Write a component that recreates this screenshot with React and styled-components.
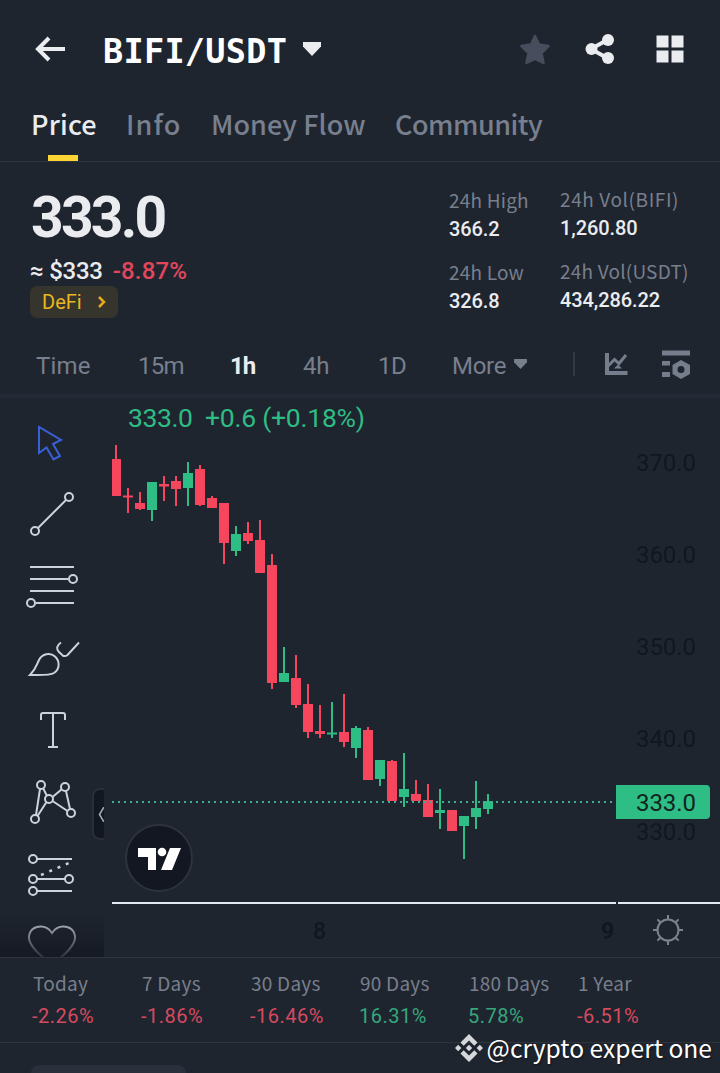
import React from "react";
import styled, { createGlobalStyle } from "styled-components";

const c = {
  bg: "#1f252f",
  line: "#2e343e",
  text: "#eaecef",
  muted: "#787f8d",
  green: "#2ebd85",
  red: "#f6465d",
  tool: "#ccd2dd",
};
const sans = `"Noto Sans CJK SC", "Noto Sans", sans-serif`;
const num = `Roboto, "Liberation Sans", sans-serif`;

const Global = createGlobalStyle`
  * { box-sizing: border-box; }
  body { margin: 0; background: ${c.bg}; color: ${c.text}; font-family: ${sans}; }
  svg { display: block; flex: none; }
`;

const Screen = styled.main`
  width: 720px;
  height: 1073px;
  overflow: hidden;
  display: flex;
  flex-direction: column;
  background: ${c.bg};
`;

const Header = styled.header`
  height: 98px;
  flex: none;
  display: flex;
  align-items: center;
  padding: 0 36px 0 34px;
`;
const Title = styled.h1`
  margin: 6px 0 0 37px;
  font: 700 33.5px/40px "DejaVu Sans Mono", monospace;
  letter-spacing: 0.3px;
  color: #fff;
  white-space: nowrap;
`;
const TitleCaret = styled.div`
  margin-left: 16px;
`;
const HeaderActions = styled.div`
  margin-left: auto;
  display: flex;
  align-items: center;
`;
const ShareIcon = styled.div`
  margin: 0 41px 0 35px;
`;

const Tabs = styled.nav`
  height: 64px;
  flex: none;
  display: flex;
  align-items: flex-start;
  padding-left: 31px;
  border-bottom: 1px solid ${c.line};
`;
const Tab = styled.div`
  width: ${(p) => p.$w}px;
  margin-right: ${(p) => p.$gap}px;
  height: 63px;
  display: flex;
  flex-direction: column;
  align-items: flex-start;
  justify-content: space-between;
  white-space: nowrap;
  font: 500 27px/52px ${sans};
  letter-spacing: ${(p) => p.$ls || 0}px;
  color: ${(p) => (p.$active ? c.text : c.muted)};
  &::after {
    content: "";
    width: 30px;
    height: 6px;
    margin-left: 17px;
    background: ${(p) => (p.$active ? "#fcd535" : "transparent")};
  }
`;

const Summary = styled.section`
  height: 173px;
  flex: none;
  display: flex;
  padding-left: 30px;
`;
const PriceBlock = styled.div`
  width: 419px;
  display: flex;
  flex-direction: column;
  align-items: flex-start;
`;
const Price = styled.div`
  margin: 29px 0 0 1px;
  font: 700 57px/54px ${num};
  letter-spacing: -2.8px;
`;
const Change = styled.div`
  display: flex;
  align-items: center;
  gap: 10px;
  margin-top: 12px;
  height: 29px;
  font: 500 24px/29px ${num};
  letter-spacing: -0.25px;
`;
const Delta = styled.span`
  color: #e2465c;
  letter-spacing: 0.15px;
`;
const Tag = styled.div`
  width: 88px;
  height: 32px;
  display: flex;
  align-items: center;
  justify-content: space-between;
  padding: 0 12px;
  border-radius: 7px;
  background: #35342d;
  color: #e9b71d;
  font: 400 20px/32px ${num};
`;
const Stats = styled.div`
  display: flex;
  padding-top: ${(p) => p.$top}px;
  width: ${(p) => p.$w}px;
  flex-direction: column;
  gap: 16px;
  flex: none;
`;
const Stat = styled.div`
  height: 56px;
  font: 500 20px/31px ${num};
  letter-spacing: -0.1px;
`;
const StatLabel = styled.div`
  font: 400 19px/28px ${sans};
  letter-spacing: ${(p) => p.$ls || 0.2}px;
  color: ${c.muted};
  white-space: nowrap;
`;

const Intervals = styled.nav`
  height: 63px;
  flex: none;
  display: flex;
  align-items: center;
  padding: 0 30px 1px 36px;
  border-bottom: 4px solid #252b36;
`;
const Interval = styled.div`
  width: ${(p) => p.$w}px;
  flex: none;
  display: flex;
  align-items: center;
  gap: 8px;
  font: ${(p) => (p.$active ? 700 : 400)} 24px/28px ${num};
  padding-top: 3px;
  letter-spacing: ${(p) => p.$ls || 0}px;
  color: ${(p) => (p.$active ? c.text : c.muted)};
  svg { margin-top: -4px; }
`;
const Separator = styled.div`
  width: 2px;
  height: 24px;
  margin-right: 30px;
  background: #343a45;
`;
const SettingsIcon = styled.div`
  margin-left: 34px;
`;

const ChartArea = styled.section`
  height: 560px;
  flex: none;
  display: flex;
  border-bottom: 1px solid ${c.line};
`;
const Toolbar = styled.aside`
  position: relative;
  width: 104px;
  flex: none;
  overflow: hidden;
  display: flex;
  flex-direction: column;
  align-items: center;
  padding-top: 8px;
`;
const Tool = styled.div`
  width: 104px;
  height: 72px;
  flex: none;
`;
const Fade = styled.div`
  position: absolute;
  inset: auto 0 0 0;
  height: 44px;
  background: linear-gradient(rgba(19, 23, 34, 0), rgba(19, 23, 34, 0.85));
`;
const Handle = styled.div`
  position: absolute;
  right: -12px;
  top: 390px;
  width: 24px;
  height: 52px;
  padding: 17px 0 0 4px;
  border: 2px solid #2a2e39;
  border-radius: 8px;
  background: #131722;
`;

const Periods = styled.section`
  height: 85px;
  flex: none;
  display: flex;
  padding: 10px 0 0 32px;
  border-bottom: 1px solid ${c.line};
`;
const Period = styled.div`
  width: ${(p) => p.$w}px;
  flex: none;
  color: ${(p) => (p.$up ? "#36a67c" : "#d64a60")};
  font: 400 20px/39px ${num};
  letter-spacing: 0.5px;
`;
const PeriodLabel = styled.div`
  font: 400 19px/29px ${sans};
  letter-spacing: 0.25px;
  padding-left: 1px;
  color: ${c.muted};
`;

const Footer = styled.footer`
  position: relative;
  height: 30px;
  flex: none;
  display: flex;
  align-items: flex-end;
  padding-left: 31px;
`;
const Chip = styled.div`
  width: 155px;
  height: 8px;
  border-radius: 8px 8px 0 0;
  background: #292f3b;
`;
const Signature = styled.div`
  position: absolute;
  right: 8px;
  top: -13px;
  display: flex;
  align-items: center;
  gap: 4px;
  color: #fff;
  font: 400 24.6px/34px ${sans};
  white-space: nowrap;
  text-shadow: 1px 1px 2px rgba(0, 0, 0, 0.5);
  svg { margin-top: 1px; }
`;

const Caret = ({ w, h, color }) => (
  <svg width={w} height={h} viewBox="0 0 18 14">
    <path d="M0 0H18V4.5L9 14L0 4.5Z" fill={color} />
  </svg>
);

// label, width, letter spacing, gap to the next tab
const tabs = [
  ["Price", 65, 0.2, 30],
  ["Info", 54, 1.2, 31],
  ["Money Flow", 154, 0.05, 30],
  ["Community", 147, -0.5, 0],
];

const periods = [
  ["Today", "-2.26%"],
  ["7 Days", "-1.86%"],
  ["30 Days", "-16.46%"],
  ["90 Days", "16.31%"],
  ["180 Days", "5.78%"],
  ["1 Year", "-6.51%"],
];

// wick top, body top, body bottom, wick bottom, rising
const candles = [
  [445, 459, 496, 496, 0], [488, 495.5, 497.5, 513, 0], [492, 503, 509, 510, 0],
  [482, 482, 510, 521, 1], [476, 484, 486.5, 501, 0], [476, 481, 489, 506, 0],
  [462, 473, 488, 506, 1], [465, 469, 505, 506, 0], [496, 498, 508, 508, 0],
  [503, 503, 543, 564, 0], [526, 534, 551, 556, 1], [522, 533, 541, 544, 0],
  [520, 540, 573, 573, 0], [554, 565, 683, 689, 0], [647, 673, 682, 682, 1],
  [655, 678, 705, 708, 0], [684, 704, 732, 738, 0], [705, 731, 734, 738, 0],
  [702, 732.5, 734.5, 738, 1], [694, 732, 742, 747, 0], [726, 728, 748, 758, 1],
  [727, 730, 780, 780, 0], [760, 760, 779, 786, 1], [760, 761, 801, 801, 0],
  [753, 789, 797, 807, 1], [780, 794, 801, 801, 0], [784, 800, 817, 817, 0],
  [789, 810, 813, 829, 1], [810, 810, 831, 831, 0], [816, 816, 826, 859, 1],
  [781, 808, 817, 829, 1], [794, 801, 809, 814, 1],
];

const Chart = () => (
  <svg width="616" height="559" viewBox="104 398 616 559" fontFamily={num}>
    <text x="128" y="427" fontSize="26.5" fill={c.green} textLength="65">333.0</text>
    <text x="205" y="427" fontSize="26.5" fill={c.green} textLength="160">+0.6 (+0.18%)</text>
    <g fontSize="24" fill="#11161f">
      {[370, 360, 350, 340, 330].map((v, i) => (
        <text key={v} x="636" y={470.500 + i * 92.3} textLength="60">{v}.0</text>
      ))}
      <text x="313" y="939" fontSize="23" fontWeight="500">8</text>
      <text x="601" y="939" fontSize="23" fontWeight="700">9</text>
    </g>
    {candles.map(([wt, bt, bb, wb, up], i) => (
      <g key={i} fill={up ? c.green : c.red}>
        <rect x={115 + i * 12} y={wt} width="2" height={wb - wt} />
        <rect x={i ? 111 + i * 12 : 112} y={bt} width={i ? 10 : 9} height={bb - bt} />
      </g>
    ))}
    <path d="M112 802H616" stroke="#3fae8e" strokeWidth="2" strokeDasharray="2 4" />
    <path d="M616 785H706Q710 785 710 789V815Q710 819 706 819H616Z" fill={c.green} />
    <text x="636" y="811" fontSize="24" fill="#11251c" textLength="60">333.0</text>
    <path d="M112 903H616M618 903H720" stroke="#e4e9f2" strokeWidth="2" />
    <circle cx="159" cy="858" r="33" fill="#131722" stroke="#2d323d" strokeWidth="2" />
    <path d="M138 848H156V870H148V857H138ZM170 848H181L172 870H161Z" fill="#fff" />
    <circle cx="162" cy="852" r="4.3" fill="#fff" />
    <g fill="none" stroke="#7d828c" strokeWidth="2">
      <circle cx="668" cy="930" r="10.5" />
      {[0, 45, 90, 135, 180, 225, 270, 315].map((a) => (
        <path key={a} d="M668 919.5V915" transform={`rotate(${a} 668 930)`} />
      ))}
    </g>
  </svg>
);

// Each tool icon is drawn in a 104 x 72 cell
const tools = [
  <path key="a" stroke="#3a60d8" d="M39 21V47L46.500 41.500L53.500 53.500L60 50L53 38L61 34Z" />,
  <g key="b"><circle cx="35" cy="53" r="4" /><circle cx="69" cy="19" r="4" /><path d="M38 50L66 22" /></g>,
  <g key="c"><path d="M30 17H74M30 29H68M30 41H74M36 53H74" /><circle cx="73" cy="29" r="4" /><circle cx="31" cy="53" r="4" /></g>,
  <path key="d" d="M30 53C36 47 36.500 43 39 38C42 32 50 30 55 34.500C60 39 60 47 54 51C50 53.500 44 53 30 53ZM61 20.500C56.500 23.500 56 27 59 30L62.500 33.300Q65 35 67.500 33L79 20.500" />,
  <path key="e" d="M41 33V28Q41 26 43 26H63Q65 26 65 28V33M53 26V60M48 60H58" transform="translate(0 -7)" />,
  <g key="f"><circle cx="41" cy="19" r="4" /><circle cx="65" cy="21" r="4" /><circle cx="49" cy="33" r="4" /><circle cx="35" cy="53" r="4" /><circle cx="71" cy="47" r="4" /><path d="M40 23L36 49M43 22L47 30M52.500 31L61.500 23.500M66 25L70 43M52.500 35L67.500 45M46.500 36L37.500 50" /></g>,
  <g key="g"><circle cx="33" cy="21" r="4" /><circle cx="33" cy="41" r="4" /><circle cx="69" cy="41" r="4" /><circle cx="33" cy="53" r="4" /><path d="M37 21H72M37 41H65M37 53H72" /><path d="M41 37L69 25" strokeWidth="2.500" strokeDasharray="3 6" /></g>,
  <path key="h" d="M52 23C48 17 42 16 37 17C29 19 27 28 31 34C34 40 42 47 52 54C62 47 70 40 73 34C77 28 75 19 67 17C62 16 56 17 52 23Z" />,
];

export default function App() {
  return (
    <Screen>
      <Global />
      <Header>
        <svg width="32" height="26" viewBox="0 0 32 26" fill="none" stroke={c.text} strokeWidth="4">
          <path d="M3 13H31M15 2L4 13L15 24" />
        </svg>
        <Title>BIFI/USDT</Title>
        <TitleCaret><Caret w={18} h={14} color={c.text} /></TitleCaret>
        <HeaderActions>
          <svg width="30" height="31" viewBox="0 0 30 31">
            <path d="M15 2L19 10.500L28.500 12L21.500 19L23.500 29L15 24.800L6.500 29L8.500 19L1.500 12L11 10.500Z" fill="#474d5d" stroke="#474d5d" strokeWidth="2.500" strokeLinejoin="round" />
          </svg>
          <ShareIcon>
            <svg width="30" height="32" viewBox="0 0 30 32" fill={c.text}>
              <path d="M6 16L23 6.500M6 16L23 25.500" stroke={c.text} strokeWidth="4" />
              <circle cx="6.500" cy="16" r="6" /><circle cx="23" cy="7" r="6" /><circle cx="23" cy="25" r="6" />
            </svg>
          </ShareIcon>
          <svg width="28" height="28" viewBox="0 0 28 28" fill={c.text}>
            <path d="M0.500 0.500H12.500V12.500H0.500ZM15.500 0.500H27.500V12.500H15.500ZM0.500 15.500H12.500V27.500H0.500ZM15.500 15.500H27.500V27.500H15.500Z" />
          </svg>
        </HeaderActions>
      </Header>
      <Tabs>
        {tabs.map(([label, w, ls, gap], i) => (
          <Tab key={label} $w={w} $ls={ls} $gap={gap} $active={i === 0}>{label}</Tab>
        ))}
      </Tabs>
      <Summary>
        <PriceBlock>
          <Price>333.0</Price>
          <Change>≈ $333<Delta>-8.87%</Delta></Change>
          <Tag>
            DeFi
            <svg width="8" height="12" viewBox="0 0 8 12" fill="none" stroke="#e9a91d" strokeWidth="2.500"><path d="M1 1L6 6L1 11" /></svg>
          </Tag>
        </PriceBlock>
        <Stats $top={24} $w={111}>
          <Stat><StatLabel>24h High</StatLabel>366.2</Stat>
          <Stat><StatLabel>24h Low</StatLabel>326.8</Stat>
        </Stats>
        <Stats $top={23} $w={150}>
          <Stat><StatLabel $ls={0.6}>24h Vol(BIFI)</StatLabel>1,260.80</Stat>
          <Stat><StatLabel>24h Vol(USDT)</StatLabel>434,286.22</Stat>
        </Stats>
      </Summary>
      <Intervals>
        <Interval $w={102} $ls={0.2}>Time</Interval>
        <Interval $w={92} $ls={-0.8}>15m</Interval>
        <Interval $w={73} $ls={-1} $active>1h</Interval>
        <Interval $w={75} $ls={-0.3}>4h</Interval>
        <Interval $w={74} $ls={-0.6}>1D</Interval>
        <Interval $w={121} $ls={-0.3}>More <Caret w={13} h={10} color={c.muted} /></Interval>
        <Separator />
        <svg width="23" height="24" viewBox="0 0 23 24" fill="none" stroke="#767d8d">
          <path d="M2 1V21H22.500" strokeWidth="4" /><path d="M3 14L9.500 7.500L14 11.500L21 3" strokeWidth="3" /><path d="M9 16.500L13 12.500L17 16.500Z" fill="#767d8d" stroke="none" />
        </svg>
        <SettingsIcon>
          <svg width="28" height="29" viewBox="0 0 28 29" fill="#767d8d">
            <path d="M0 0.500H28V5.500H0ZM0 11H8V15.500H0ZM0 22H8V27H0Z" />
            <path fillRule="evenodd" d="M19 10L28 15V24L19 29L10.500 24V15ZM19 16A3.500 3.500 0 1 0 19 23A3.500 3.500 0 1 0 19 16Z" />
          </svg>
        </SettingsIcon>
      </Intervals>
      <ChartArea>
        <Toolbar>
          {tools.map((icon, i) => (
            <Tool key={i}>
              <svg width="104" height="72" viewBox="0 0 104 72" fill="none" stroke={c.tool} strokeWidth="2">{icon}</svg>
            </Tool>
          ))}
          <Fade />
          <Handle>
            <svg width="7" height="15" viewBox="0 0 7 15" fill="none" stroke="#a3a8b3" strokeWidth="1.600"><path d="M6 0L1.500 7.500L6 15" /></svg>
          </Handle>
        </Toolbar>
        <Chart />
      </ChartArea>
      <Periods>
        {periods.map(([label, value]) => (
          <Period key={label} $w={109} $up={!value.startsWith("-")}>
            <PeriodLabel>{label}</PeriodLabel>
            {value}
          </Period>
        ))}
      </Periods>
      <Footer>
        <Chip />
        <Signature>
          <svg width="28" height="28" viewBox="0 0 28 28" fill="#d5d7da">
            <path d="M14 0L22.500 8.500L19.300 11.700L14 6.400L8.700 11.700L5.500 8.500ZM14 28L22.500 19.500L19.300 16.300L14 21.600L8.700 16.300L5.500 19.500ZM3.200 10.800L6.400 14L3.200 17.200L0 14ZM24.800 10.800L28 14L24.800 17.200L21.600 14ZM14 10.800L17.200 14L14 17.200L10.800 14Z" />
          </svg>
          @crypto expert one
        </Signature>
      </Footer>
    </Screen>
  );
}
